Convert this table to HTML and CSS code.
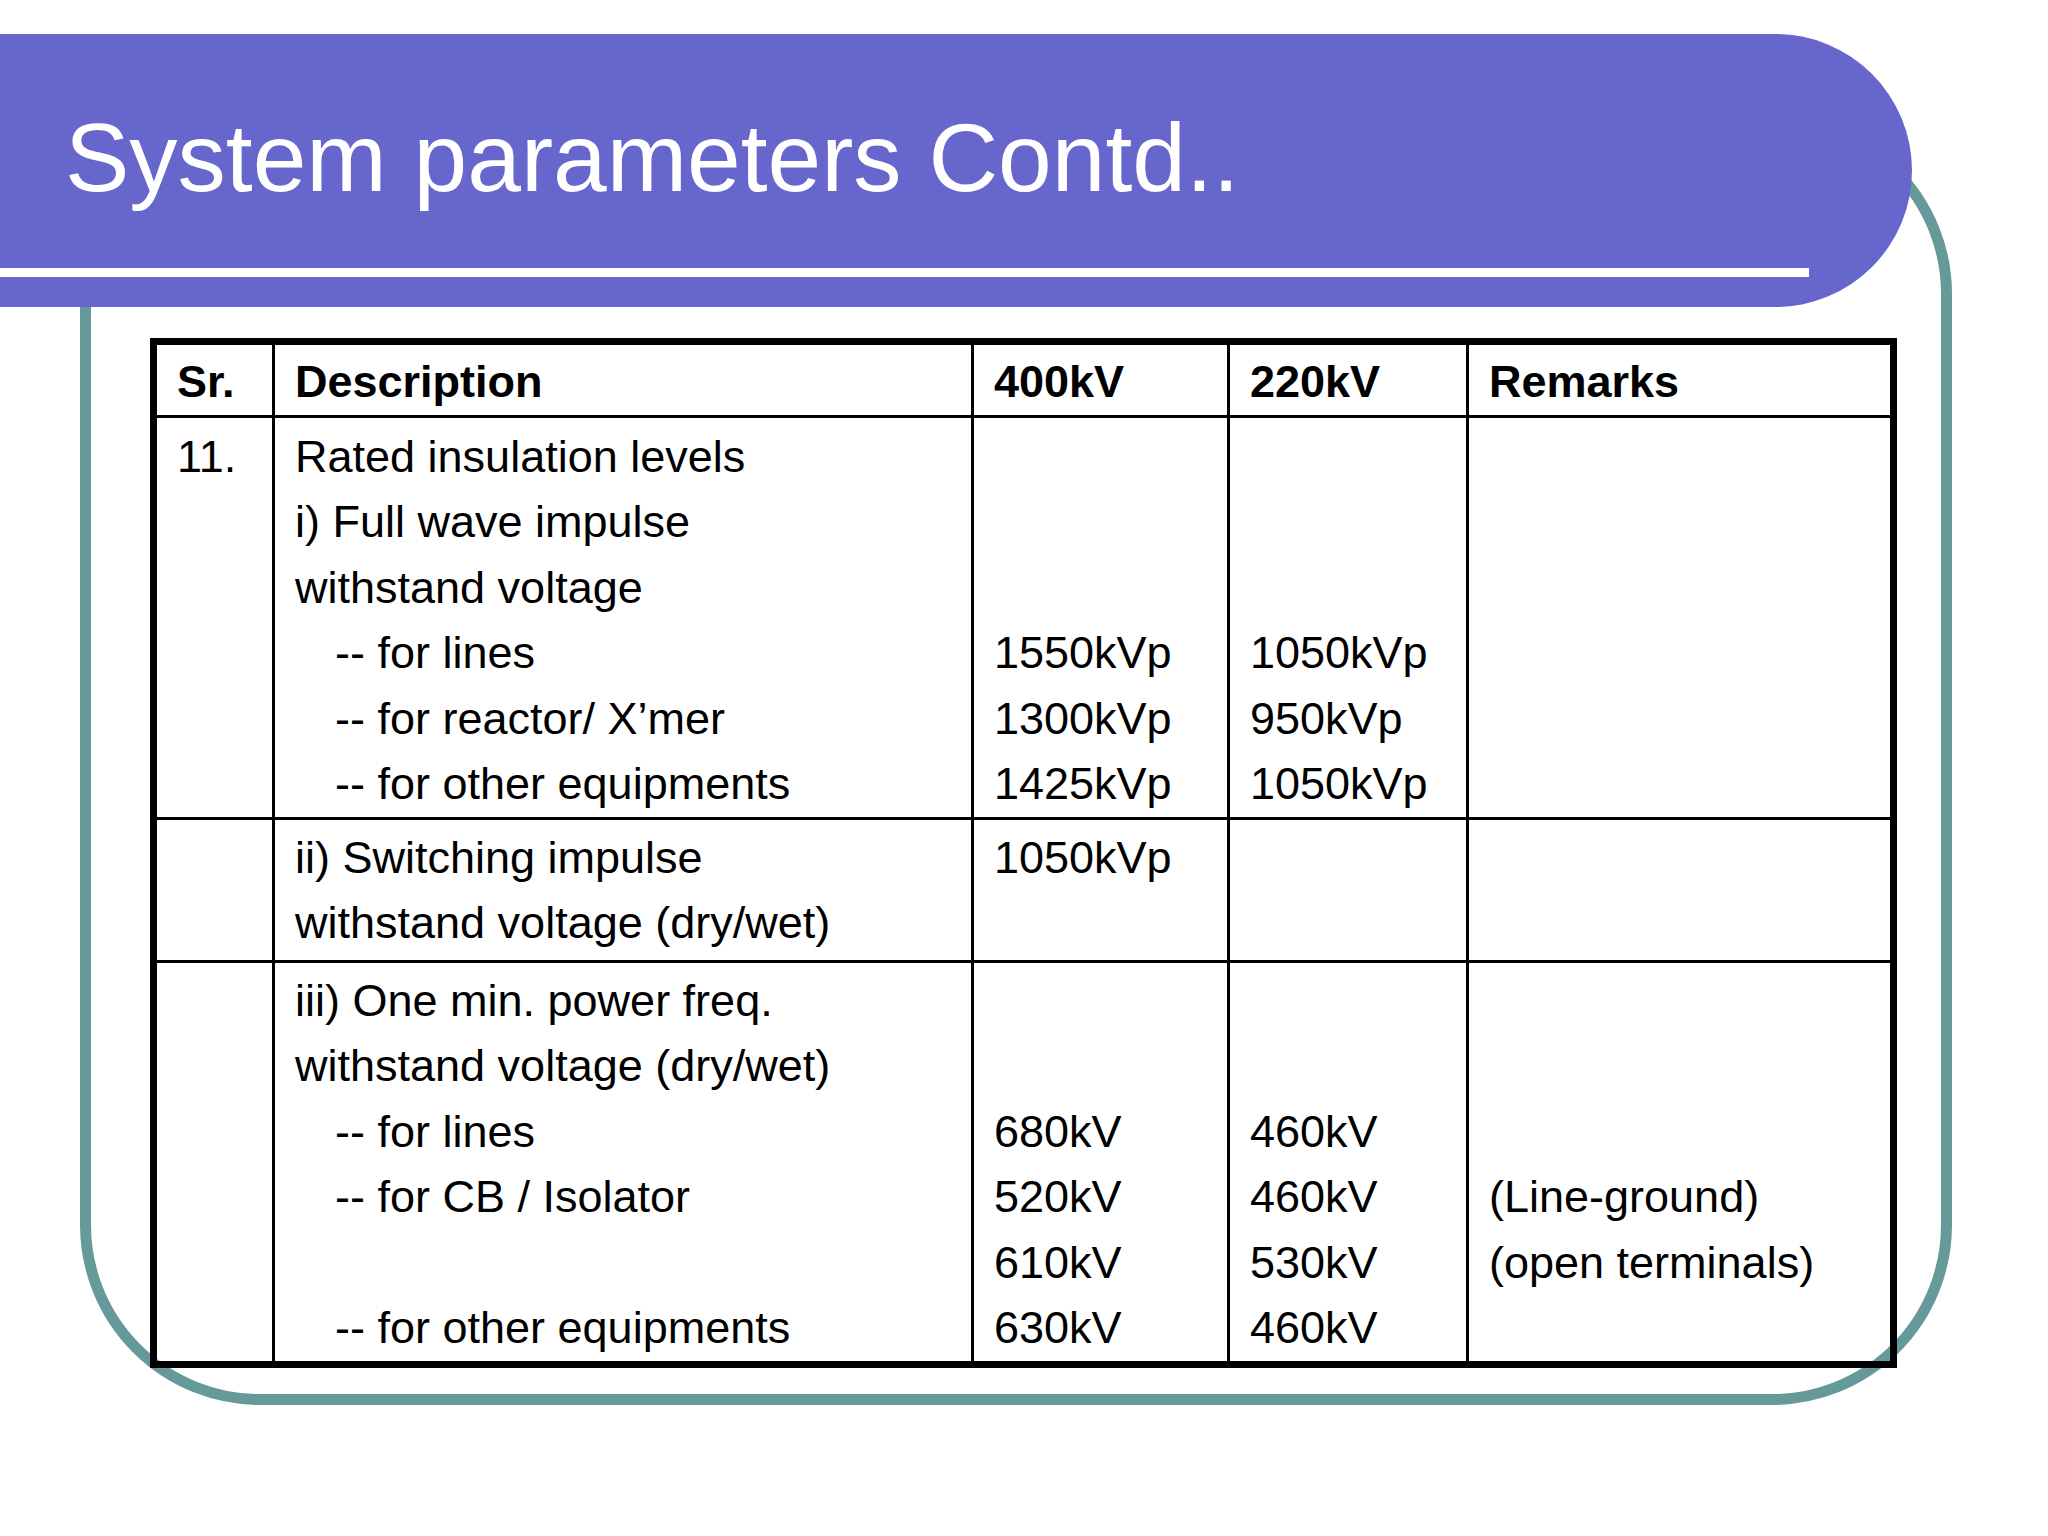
FILE: index.html
```html
<!DOCTYPE html>
<html>
<head>
<meta charset="utf-8">
<title>System parameters Contd..</title>
<link rel="stylesheet" href="styles.css">
</head>
<body>
<div class="slide">
  <div class="frame"></div>
  <header class="titlebar">
    <h1 class="title">System parameters Contd..</h1>
    <div class="rule"></div>
  </header>
  <table class="params">
    <colgroup>
      <col class="c-sr"><col class="c-desc"><col class="c-400"><col class="c-220"><col class="c-rem">
    </colgroup>
    <thead>
      <tr class="r-head">
        <th>Sr.</th><th>Description</th><th>400kV</th><th>220kV</th><th class="last">Remarks</th>
      </tr>
    </thead>
    <tbody>
      <tr class="r-a">
        <td><div class="ln">11.</div></td>
        <td>
          <div class="ln">Rated insulation levels</div>
          <div class="ln">i) Full wave impulse</div>
          <div class="ln">withstand voltage</div>
          <div class="ln ind">-- for lines</div>
          <div class="ln ind">-- for reactor/ X’mer</div>
          <div class="ln ind">-- for other equipments</div>
        </td>
        <td>
          <div class="ln"></div><div class="ln"></div><div class="ln"></div>
          <div class="ln">1550kVp</div>
          <div class="ln">1300kVp</div>
          <div class="ln">1425kVp</div>
        </td>
        <td>
          <div class="ln"></div><div class="ln"></div><div class="ln"></div>
          <div class="ln">1050kVp</div>
          <div class="ln">950kVp</div>
          <div class="ln">1050kVp</div>
        </td>
        <td class="last"></td>
      </tr>
      <tr class="r-b">
        <td></td>
        <td>
          <div class="ln">ii) Switching impulse</div>
          <div class="ln">withstand voltage (dry/wet)</div>
        </td>
        <td><div class="ln">1050kVp</div></td>
        <td></td>
        <td class="last"></td>
      </tr>
      <tr class="r-c">
        <td class="bottom"></td>
        <td class="bottom">
          <div class="ln">iii) One min. power freq.</div>
          <div class="ln">withstand voltage (dry/wet)</div>
          <div class="ln ind">-- for lines</div>
          <div class="ln ind">-- for CB / Isolator</div>
          <div class="ln"></div>
          <div class="ln ind">-- for other equipments</div>
        </td>
        <td class="bottom">
          <div class="ln"></div><div class="ln"></div>
          <div class="ln">680kV</div>
          <div class="ln">520kV</div>
          <div class="ln">610kV</div>
          <div class="ln">630kV</div>
        </td>
        <td class="bottom">
          <div class="ln"></div><div class="ln"></div>
          <div class="ln">460kV</div>
          <div class="ln">460kV</div>
          <div class="ln">530kV</div>
          <div class="ln">460kV</div>
        </td>
        <td class="bottom last">
          <div class="ln"></div><div class="ln"></div><div class="ln"></div>
          <div class="ln">(Line-ground)</div>
          <div class="ln">(open terminals)</div>
        </td>
      </tr>
    </tbody>
  </table>
</div>
</body>
</html>
```
FILE: styles.css
```css
html, body {
  margin: 0;
  padding: 0;
  background: #ffffff;
}

.slide {
  position: relative;
  width: 2048px;
  height: 1536px;
  overflow: hidden;
  background: #ffffff;
  font-family: "Liberation Sans", Arial, sans-serif;
  color: #000000;
  padding-top: 34px;
  box-sizing: border-box;
}

/* decorative rounded frame behind the content */
.frame {
  position: absolute;
  left: 80px;
  top: 114px;
  width: 1872px;
  height: 1291px;
  box-sizing: border-box;
  border: 11px solid #669999;
  border-radius: 180px;
  z-index: 0;
}

.titlebar {
  position: relative;
  z-index: 1;
  width: 1912px;
  height: 273px;
  background: #6666cc;
  border-radius: 0 137px 137px 0;
  display: flex;
  flex-direction: column;
  box-sizing: border-box;
  padding-top: 64px;
}

.title {
  margin: 0;
  padding-left: 65px;
  font-family: "Liberation Sans", Arial, sans-serif;
  font-weight: normal;
  font-size: 96.5px;
  line-height: 120px;
  color: #ffffff;
  white-space: nowrap;
}

.rule {
  margin-top: 50px;
  width: 1809px;
  height: 9px;
  background: #ffffff;
}

.params {
  position: relative;
  z-index: 2;
  margin-top: 31px;
  margin-left: 150px;
  border: 7px solid #000000;
  border-spacing: 0;
  border-collapse: separate;
  table-layout: fixed;
  width: 1747px;
  font-size: 45px;
  background: transparent;
}

.c-sr { width: 118px; }
.c-desc { width: 699px; }
.c-400 { width: 256px; }
.c-220 { width: 239px; }
.c-rem { width: 421px; }

.params th,
.params td {
  box-sizing: border-box;
  border-right: 3px solid #000000;
  border-bottom: 3px solid #000000;
  padding: 0 0 0 20px;
  vertical-align: top;
  text-align: left;
  line-height: 65.5px;
  white-space: nowrap;
}

.params th {
  font-weight: bold;
  padding-top: 4px;
}

.params .last { border-right: none; }
.params .bottom { border-bottom: none; }

.r-a td { padding-top: 6px; }
.r-b td { padding-top: 5px; padding-bottom: 4px; }
.r-c td { padding-top: 5px; }

.ln {
  height: 65.5px;
}

.ind {
  padding-left: 40px;
}
```
